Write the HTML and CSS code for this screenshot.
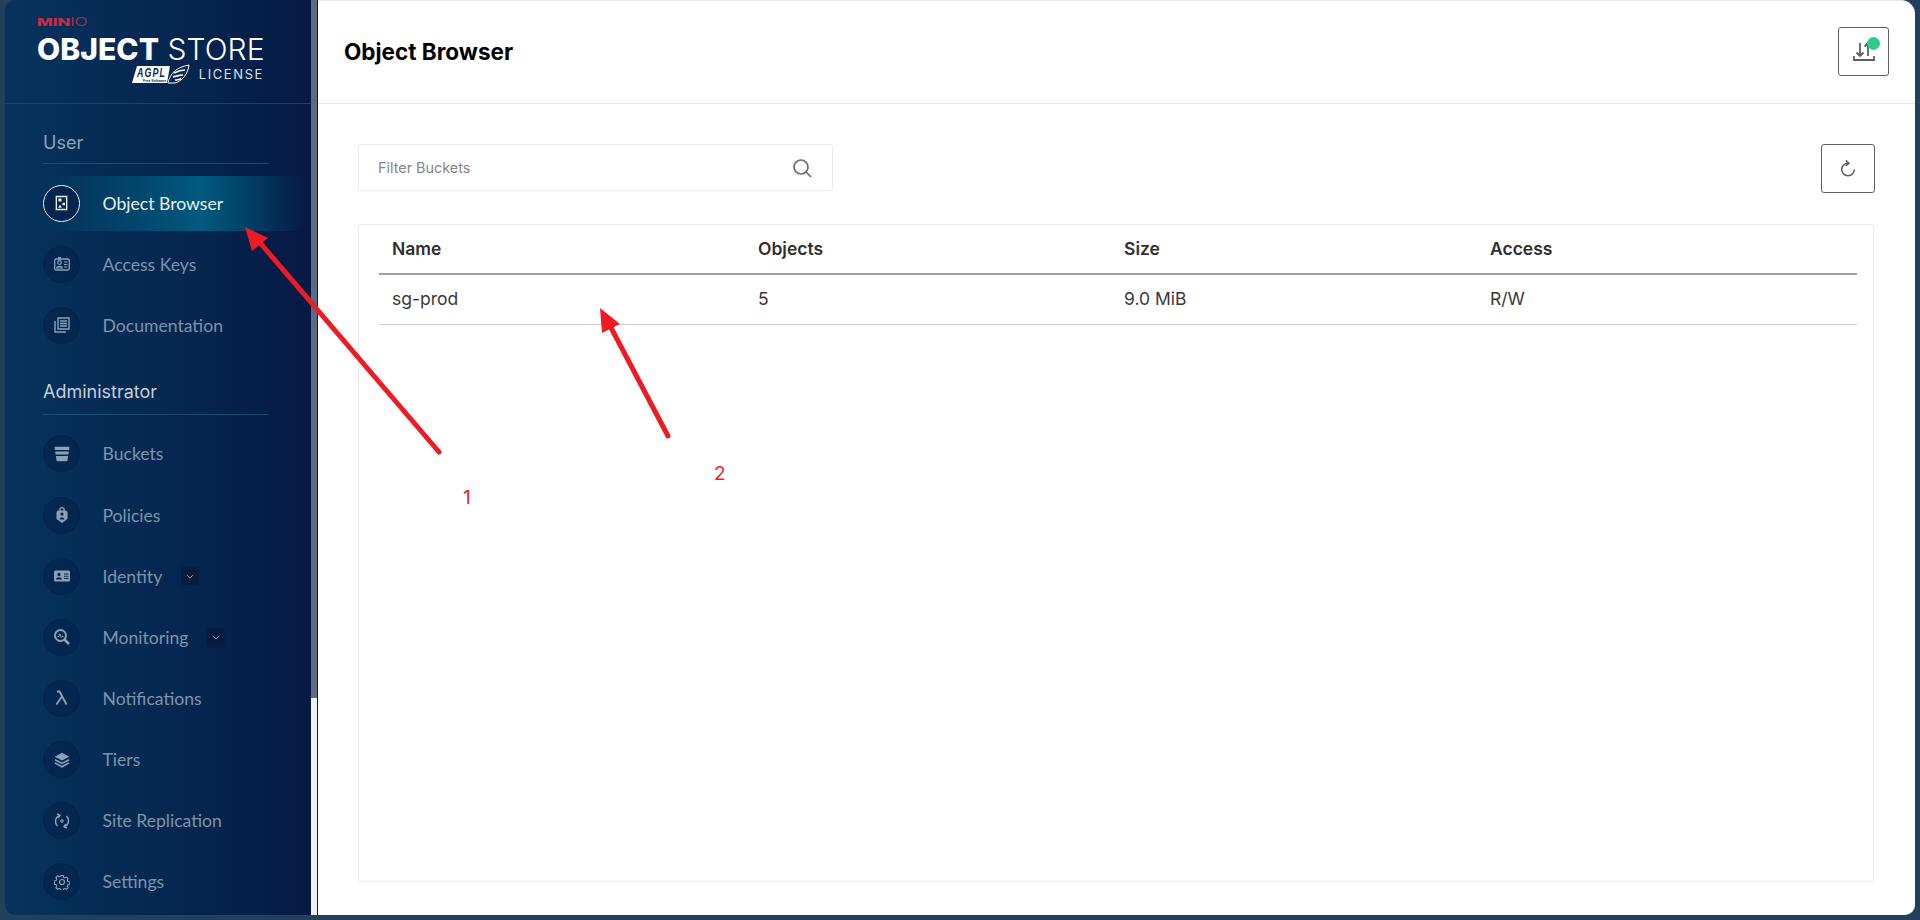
FILE: index.html
```html
<!DOCTYPE html>
<html lang="en">
<head>
<meta charset="utf-8">
<title>Object Browser</title>
<link rel="stylesheet" href="styles.css">
</head>
<body>
<div class="app">
  <aside class="sidebar">
    <div class="logo">
      <div class="logo-minio"><b>MIN</b><span>IO</span></div>
      <div class="logo-title"><b>OBJECT</b> <span>STORE</span></div>
      <div class="logo-license">
        <svg class="agpl" width="58" height="20" viewBox="0 0 58 20">
          <path d="M5 2H38L35 19H0Z" fill="#fff"/>
          <text x="5" y="13" class="agpl-text" textLength="29" lengthAdjust="spacingAndGlyphs">AGPL</text>
          <text x="11" y="18" class="agpl-small">Free Software</text>
          <path d="M36 19C38 9 45 3 57 1C56 9 51 17 43 19Z" fill="#0a2a55" stroke="#fff" stroke-width="1"/>
          <path d="M42 9C46 7 49 6 53 6M41 13C45 12 48 11 51 11M43 16C46 16 47 15 49 15" fill="none" stroke="#fff" stroke-width="1.6"/>
        </svg>
        <span>LICENSE</span>
      </div>
    </div>
    <nav class="nav">
      <div class="section section-first section-dim">User</div>
      <a class="item item-active">
        <span class="ico"><svg viewBox="0 0 16 16" width="15" height="16"><path d="M2.500 1h11v14h-11z" fill="none" stroke="currentColor" stroke-width="1.500"/><path d="M4.800 3.200h3.200v3.200H4.800zM9 7.800h2.700v2.700H9zM4.500 13l1.900-3.400L8.300 13z" fill="currentColor"/></svg></span>
        <span class="label">Object Browser</span>
      </a>
      <a class="item">
        <span class="ico"><svg viewBox="0 0 16 16" width="16" height="16"><rect x="0.700" y="3" width="14.600" height="11" rx="1.500" fill="none" stroke="currentColor" stroke-width="1.300"/><circle cx="5.500" cy="6.500" r="1.800" fill="none" stroke="currentColor" stroke-width="1.200"/><path d="M2.600 12c.3-2.200 5.500-2.200 5.800 0zM10 6h3.500M10 8.500h3.500M10 11h3.500" fill="none" stroke="currentColor" stroke-width="1.200"/><path d="M4 1h3v2H4z" fill="currentColor"/></svg></span>
        <span class="label">Access Keys</span>
      </a>
      <a class="item">
        <span class="ico"><svg viewBox="0 0 16 16" width="16" height="16"><path d="M4 1h11v11H4z" fill="none" stroke="currentColor" stroke-width="1.400"/><path d="M6 4h7M6 6.500h7M6 9h7" stroke="currentColor" stroke-width="1.300"/><path d="M1 4v11h11" fill="none" stroke="currentColor" stroke-width="1.400"/></svg></span>
        <span class="label">Documentation</span>
      </a>
      <div class="section">Administrator</div>
      <a class="item">
        <span class="ico"><svg viewBox="0 0 16 16" width="16" height="16"><path d="M.5 .8h15l-.4 3.200H.9zM1.200 5.600h13.600l-.4 2.800H1.600zM1.900 10h12.200l-.6 4.300q-.1.900-1 .9H3.500q-.9 0-1-.9z" fill="currentColor"/></svg></span>
        <span class="label">Buckets</span>
      </a>
      <a class="item">
        <span class="ico"><svg viewBox="0 0 16 16" width="16" height="16"><path fill-rule="evenodd" d="M5.200 3.500V2.800a2.800 2.800 0 0 1 5.600 0v.7h1.200l1.500 1.500v7L8 16l-5.500-4V5L4 3.500zM6.500 3.500h3V2.800a1.500 1.500 0 0 0-3 0zM8 5.500a1.600 1.600 0 1 0 0 3.200 1.600 1.600 0 0 0 0-3.200zM5.500 12.500h5c0-2.600-5-2.600-5 0z" fill="currentColor"/></svg></span>
        <span class="label">Policies</span>
      </a>
      <a class="item">
        <span class="ico"><svg viewBox="0 0 16 16" width="16" height="16"><path fill-rule="evenodd" d="M1.500 2.500h13a1.500 1.500 0 0 1 1.500 1.500v8a1.500 1.500 0 0 1-1.500 1.500h-13A1.500 1.500 0 0 1 0 12V4a1.500 1.500 0 0 1 1.500-1.500zM5 4.800a1.700 1.700 0 1 0 0 3.400 1.700 1.700 0 0 0 0-3.400zM2 11.500h6c0-3-6-3-6 0zM10 5.500v1h4.500v-1zM10 7.800v1h4.500v-1zM10 10.100v1h4.500v-1z" fill="currentColor"/></svg></span>
        <span class="label">Identity</span>
        <span class="chev"><svg viewBox="0 0 10 6" width="8" height="5"><path d="M1 1l4 4 4-4" fill="none" stroke="currentColor" stroke-width="1.200"/></svg></span>
      </a>
      <a class="item">
        <span class="ico"><svg viewBox="0 0 16 16" width="16" height="16"><circle cx="6.500" cy="6.500" r="5.500" fill="none" stroke="currentColor" stroke-width="2"/><path d="M10.500 10.500l4.500 4.500" stroke="currentColor" stroke-width="2.600"/><path d="M3.500 7.500H5l1-2.500 1.300 3.500.7-1h1.500" fill="none" stroke="currentColor" stroke-width="1"/></svg></span>
        <span class="label">Monitoring</span>
        <span class="chev"><svg viewBox="0 0 10 6" width="8" height="5"><path d="M1 1l4 4 4-4" fill="none" stroke="currentColor" stroke-width="1.200"/></svg></span>
      </a>
      <a class="item">
        <span class="ico"><svg viewBox="0 0 16 16" width="16" height="16"><path d="M3 1.500h2.500L12.500 14.500M7.500 7L2.500 14.500" fill="none" stroke="currentColor" stroke-width="1.900"/></svg></span>
        <span class="label">Notifications</span>
      </a>
      <a class="item">
        <span class="ico"><svg viewBox="0 0 16 16" width="16" height="16"><path d="M8 .8l7.300 3.900L8 8.600.7 4.700z" fill="currentColor"/><path d="M.9 7.700L8 11.400l7.100-3.700M.9 10.900L8 14.800l7.100-3.900" fill="none" stroke="currentColor" stroke-width="1.600"/></svg></span>
        <span class="label">Tiers</span>
      </a>
      <a class="item">
        <span class="ico"><svg viewBox="0 0 16 16" width="16" height="16"><path d="M5.500 2.300A6.500 6.500 0 0 0 3.500 13M10.500 13.700A6.500 6.500 0 0 0 12.500 3M3 .8L6 2.300 4.300 4.900M13 15.200L10 13.700 11.700 11.100" fill="none" stroke="currentColor" stroke-width="1.400"/><path d="M8 6v4M6 8h4" stroke="currentColor" stroke-width="1.200"/></svg></span>
        <span class="label">Site Replication</span>
      </a>
      <a class="item">
        <span class="ico"><svg viewBox="0 0 16 16" width="16" height="16"><circle cx="8" cy="8" r="2.500" fill="none" stroke="currentColor" stroke-width="1.200"/><path d="M6.700.8h2.600l.4 2 1.500.7 1.800-1 1.800 1.800-1 1.800.7 1.500 2 .4v2.600l-2 .4-.7 1.500 1 1.800-1.800 1.800-1.800-1-1.500.7-.4 2H6.700l-.4-2-1.500-.7-1.800 1-1.800-1.800 1-1.800-.7-1.500-2-.4V6.700l2-.4.7-1.500-1-1.800 1.800-1.800 1.800 1 1.500-.7z" transform="translate(.8 .8) scale(.9)" fill="none" stroke="currentColor" stroke-width="1.200"/></svg></span>
        <span class="label">Settings</span>
      </a>
    </nav>
  </aside>
  <div class="scroll"><div class="thumb"></div></div>
  <main class="main">
    <header class="top">
      <h1>Object Browser</h1>
      <button class="btn btn-up">
        <svg viewBox="0 0 24 24" width="24" height="24"><path d="M2 17v4h20v-4M8 4v13M4.500 13.500L8 17l3.500-3.500M16 17V4M12.500 7.500L16 4l3.500 3.500" fill="none" stroke="currentColor" stroke-width="1.800"/></svg>
        <span class="dot"></span>
      </button>
    </header>
    <section class="content">
      <div class="toolbar">
        <div class="filter">
          <span>Filter Buckets</span>
          <svg viewBox="0 0 20 20" width="20" height="20"><circle cx="9" cy="9" r="7" fill="none" stroke="currentColor" stroke-width="1.700"/><path d="M14 14l5 5" stroke="currentColor" stroke-width="1.700"/></svg>
        </div>
        <button class="btn btn-refresh">
          <svg viewBox="0 0 20 20" width="18" height="18"><path d="M10 3.500A7 7 0 1 0 17 10.500" fill="none" stroke="currentColor" stroke-width="1.700"/><path d="M7.500 0.500l3.500 3-3.500 3" fill="none" stroke="currentColor" stroke-width="1.700"/></svg>
        </button>
      </div>
      <div class="card">
        <table class="table">
          <colgroup><col class="c"><col class="c"><col class="c"><col></colgroup>
          <thead><tr><th>Name</th><th>Objects</th><th>Size</th><th>Access</th></tr></thead>
          <tbody><tr><td>sg-prod</td><td>5</td><td>9.0 MiB</td><td>R/W</td></tr></tbody>
        </table>
      </div>
    </section>
  </main>
</div>
<svg class="marks" width="1920" height="920" viewBox="0 0 1920 920">
  <path d="M439 452L256 238M668 436L607 320" fill="none" stroke="#ed1c24" stroke-width="5" stroke-linecap="round"/>
  <path d="M245 227L268 238L252 251ZM600 308L620 324L602 333Z" fill="#ed1c24"/>
  <text x="463" y="504" class="mark">1</text>
  <text x="714" y="480" class="mark">2</text>
</svg>
</body>
</html>
```
FILE: styles.css
```css
* { box-sizing: border-box; }
html, body { margin: 0; height: 100%; overflow: hidden; }
body { background: #223f5d; font-family: "Inter", sans-serif; }
.app { display: flex; height: 920px; padding: 0 5px 5px; }

.sidebar {
  width: 306px; flex: none; border-radius: 10px 0 0 10px;
  background: linear-gradient(90deg, #06335c 0%, #052a54 40%, #05234d 70%, #061b47 92%, #071a46 100%);
}
.logo { height: 104px; border-bottom: 1px solid #164368; padding: 17px 0 0 32px; color: #fff; }
.logo-minio { font-size: 11px; line-height: 11px; color: #c72c48; transform: scaleX(1.52); transform-origin: left; white-space: nowrap; }
.logo-minio b { font-weight: 800; }
.logo-minio span { font-weight: 300; }
.logo-title { margin-top: 5px; width: 232px; font-size: 30px; line-height: 32px; white-space: nowrap; letter-spacing: .05px; }
.logo-title b { font-weight: 800; }
.logo-title span { font-weight: 300; }
.logo-license { display: flex; align-items: center; justify-content: flex-end; gap: 9px; width: 227px; margin-top: -1px; font-size: 13px; letter-spacing: 1.600px; color: #d9e1e8; font-weight: 400; }
.agpl { flex: none; }
.agpl-text { font: italic 700 13px "Liberation Sans", sans-serif; fill: #0a2a55; }
.agpl-small { font: 700 3.500px "Liberation Sans", sans-serif; fill: #0a2a55; letter-spacing: 0; }

.nav { padding: 0 0 0 38px; }
.section {
  width: 226px; height: 56.500px; display: flex; align-items: flex-end; padding-bottom: 11px;
  border-bottom: 1px solid #164a70; margin-bottom: 11px;
  font-size: 18px; line-height: 22px; color: #c3cfda;
}
.section-first { height: 60px; padding-bottom: 9px; margin-bottom: 11.500px; }
.section-dim { color: #8ea4ba; }
.item {
  display: flex; align-items: center; height: 55px; width: 262px; margin-bottom: 6.150px;
  color: #7c94ab; font-family: "Lato", sans-serif; font-size: 17.600px;
}
.item-active {
  color: #e9eff4;
  background: linear-gradient(90deg, rgba(0,92,127,0) 0%, #005a7e 60%, rgba(0,92,127,0) 100%);
}
.ico {
  width: 37px; height: 37px; flex: none; border-radius: 50%; display: flex; align-items: center; justify-content: center;
  background: rgba(2,28,70,.45); border: 1px solid rgba(2,28,70,.35); margin-right: 22.500px; color: #8aa2b8;
}
.item-active .ico { background: #05244e; border: 1px solid #e6edf2; color: #e6edf2; }
.label { white-space: nowrap; }
.chev { width: 18px; height: 18px; margin-left: 19px; border-radius: 2px; background: #081c42; display: flex; align-items: center; justify-content: center; color: #8199b0; }

.scroll { width: 6px; flex: none; background: #f1f1f1; }
.thumb { height: 698px; background: #5b6a85; }
.main {
  flex: 1; margin-left: 1px; background: #fff; border-radius: 0 14px 10px 0;
  box-shadow: -1px 0 0 #071946; border-top: 1px solid #e4e9ee; display: flex; flex-direction: column;
}
.top { height: 103px; flex: none; border-bottom: 1px solid #e5e5e5; display: flex; align-items: center; justify-content: space-between; padding: 0 26px 2px 26px; }
.top h1 { margin: 0; font-size: 22.500px; font-weight: 700; color: #000; }
.btn { position: relative; display: flex; align-items: center; justify-content: center; background: #fff; border: 1px solid #5e5e5e; border-radius: 3px; padding: 0; color: #5e5e5e; }
.btn-up { width: 51px; height: 49px; }
.dot { position: absolute; top: 9px; left: 28px; width: 13px; height: 13px; border-radius: 50%; background: #2ecb8c; }
.btn-refresh { width: 54px; height: 49px; margin-right: -1px; }
.content { flex: 1; display: flex; flex-direction: column; padding: 40px 41px 33px 40px; }
.toolbar { display: flex; justify-content: space-between; align-items: flex-start; margin-bottom: 31px; }
.filter { width: 475px; height: 47px; border: 1px solid #eaeaea; border-radius: 3px; display: flex; align-items: center; justify-content: space-between; padding: 0 20px 0 19px; font-size: 14.400px; color: #858585; }
.filter svg { color: #6e6e6e; }
.card { flex: 1; border: 1px solid #eaeaea; border-radius: 3px; padding: 0 16px 0 20px; }
.table { width: 100%; border-collapse: collapse; table-layout: fixed; font-size: 17.500px; color: #393939; }
.c { width: 366px; }
.table th { height: 49px; text-align: left; padding: 0 0 2px 13px; font-weight: 600; border-bottom: 2px solid #a0a0a0; color: #2f2f2f; }
.table td { height: 50px; padding: 0 0 1px 13px; font-weight: 400; border-bottom: 1px solid #c9c9c9; }
.marks { position: absolute; left: 0; top: 0; pointer-events: none; }
.mark { font: 400 19px "Inter", sans-serif; fill: #ed1c24; }
```
